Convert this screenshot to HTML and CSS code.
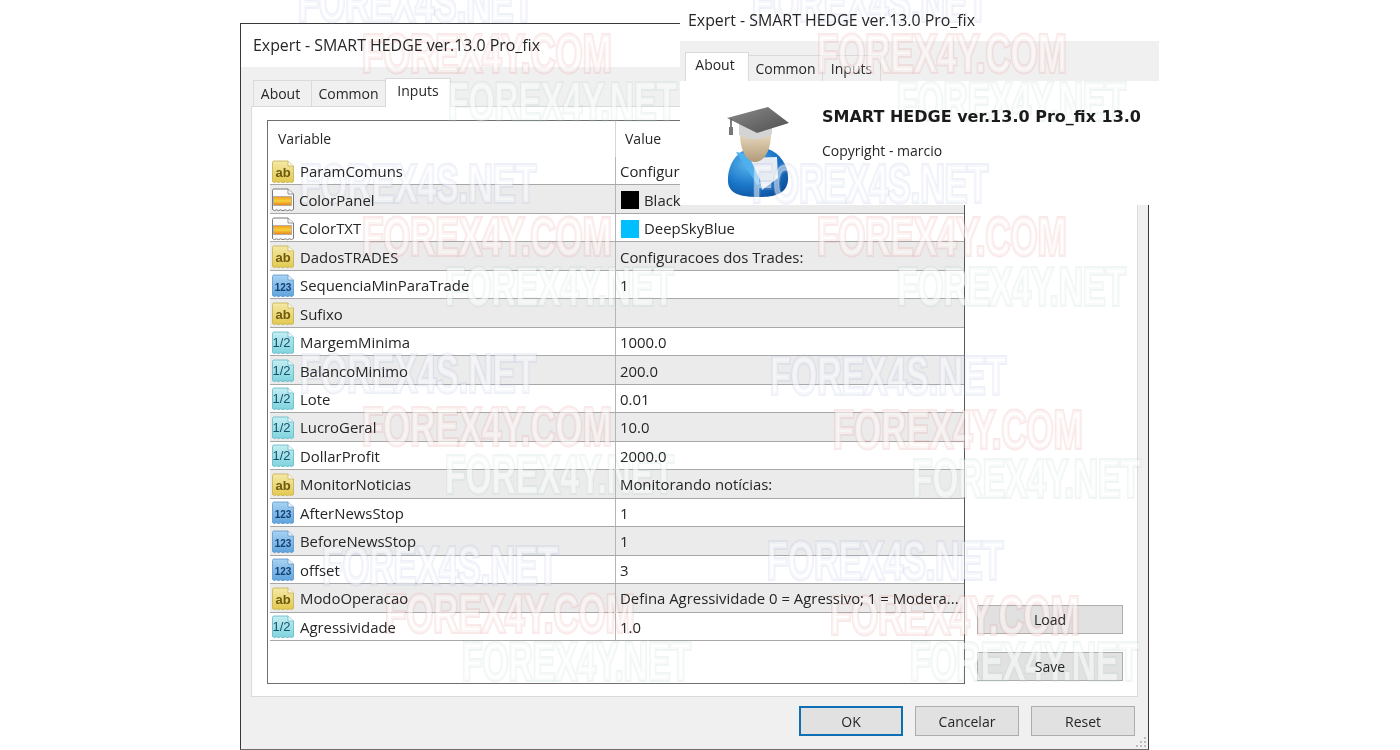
FILE: index.html
```html
<!DOCTYPE html>
<html lang="en">
<head>
    <meta charset="UTF-8">
    <title>Expert - SMART HEDGE ver.13.0 Pro_fix</title>
    <link rel="stylesheet" href="styles.css">
</head>
<body>
    <svg class="defs" width="0" height="0">
        <defs>
            <linearGradient id="gradAb" x1="0" y1="0" x2="0" y2="1">
                <stop offset="0" stop-color="#f4e9a8"/>
                <stop offset="1" stop-color="#e3c94e"/>
            </linearGradient>
            <linearGradient id="gradInt" x1="0" y1="0" x2="0" y2="1">
                <stop offset="0" stop-color="#a9d3f2"/>
                <stop offset="1" stop-color="#5ea3dd"/>
            </linearGradient>
            <linearGradient id="gradDbl" x1="0" y1="0" x2="0" y2="1">
                <stop offset="0" stop-color="#c4eef2"/>
                <stop offset="1" stop-color="#7fd3de"/>
            </linearGradient>
            <linearGradient id="gradBar" x1="0" y1="0" x2="0" y2="1">
                <stop offset="0" stop-color="#f39a1a"/>
                <stop offset="0.5" stop-color="#f6d23c"/>
                <stop offset="1" stop-color="#ec7a18"/>
            </linearGradient>
            <linearGradient id="gradCap" x1="0" y1="0" x2="1" y2="1">
                <stop offset="0" stop-color="#8b8b8b"/>
                <stop offset="1" stop-color="#4f4f4f"/>
            </linearGradient>
            <linearGradient id="gradFace" x1="0" y1="0" x2="0" y2="1">
                <stop offset="0" stop-color="#e6d8bd"/>
                <stop offset="1" stop-color="#b39a78"/>
            </linearGradient>
            <radialGradient id="gradSuit" cx="0.35" cy="0.3" r="0.85">
                <stop offset="0" stop-color="#5db8ee"/>
                <stop offset="0.55" stop-color="#1a76c8"/>
                <stop offset="1" stop-color="#0b4a94"/>
            </radialGradient>
            <symbol id="sheet" viewBox="0 0 24 24">
                <path d="M1.5 2.5 Q1.5 1 3 1 H17 L22.5 6 V21.5 Q20.5 23.5 18.5 21.8 Q16.5 23.5 14.5 21.8 Q12 23.5 9.5 21.8 Q7.5 23.5 5.5 21.8 Q3.5 23.5 1.5 21.5 Z"/>
                <path d="M17 1 V6 H22.5" fill="#ffffff" fill-opacity="0.75" stroke-width="0.7"/>
            </symbol>
        </defs>
    </svg>

    <div class="window main-window">
        <div class="title main-title">Expert - SMART HEDGE ver.13.0 Pro_fix</div>
        <div class="main-body">
            <div class="tabs main-tabs">
                <div class="tab tab-about">About</div>
                <div class="tab tab-common">Common</div>
                <div class="tab tab-inputs active">Inputs</div>
            </div>
            <div class="panel">
                <div class="grid-box">
                    <div class="grid-head">
                        <div class="head-name">Variable</div>
                        <div class="head-value">Value</div>
                    </div>

                    <div class="row">
                        <div class="cell-name"><svg class="icon ab"><use href="#sheet"/><text x="12" y="16.5">ab</text></svg>ParamComuns</div>
                        <div class="cell-value">Configuracoes Gerais:</div>
                    </div>
                    <div class="row">
                        <div class="cell-name tight"><svg class="icon col"><use href="#sheet"/><rect x="2.5" y="8.5" width="18" height="9" fill="url(#gradBar)" stroke="#a8a8a8" stroke-width="0.8"/></svg>ColorPanel</div>
                        <div class="cell-value"><span class="swatch black"></span>Black</div>
                    </div>
                    <div class="row">
                        <div class="cell-name tight"><svg class="icon col"><use href="#sheet"/><rect x="2.5" y="8.5" width="18" height="9" fill="url(#gradBar)" stroke="#a8a8a8" stroke-width="0.8"/></svg>ColorTXT</div>
                        <div class="cell-value"><span class="swatch sky"></span>DeepSkyBlue</div>
                    </div>
                    <div class="row">
                        <div class="cell-name"><svg class="icon ab"><use href="#sheet"/><text x="12" y="16.5">ab</text></svg>DadosTRADES</div>
                        <div class="cell-value">Configuracoes dos Trades:</div>
                    </div>
                    <div class="row">
                        <div class="cell-name"><svg class="icon int"><use href="#sheet"/><text x="12" y="17">123</text></svg>SequenciaMinParaTrade</div>
                        <div class="cell-value">1</div>
                    </div>
                    <div class="row">
                        <div class="cell-name"><svg class="icon ab"><use href="#sheet"/><text x="12" y="16.5">ab</text></svg>Sufixo</div>
                        <div class="cell-value"></div>
                    </div>
                    <div class="row">
                        <div class="cell-name"><svg class="icon dbl"><use href="#sheet"/><text x="10.5" y="16">1/2</text></svg>MargemMinima</div>
                        <div class="cell-value">1000.0</div>
                    </div>
                    <div class="row">
                        <div class="cell-name"><svg class="icon dbl"><use href="#sheet"/><text x="10.5" y="16">1/2</text></svg>BalancoMinimo</div>
                        <div class="cell-value">200.0</div>
                    </div>
                    <div class="row">
                        <div class="cell-name"><svg class="icon dbl"><use href="#sheet"/><text x="10.5" y="16">1/2</text></svg>Lote</div>
                        <div class="cell-value">0.01</div>
                    </div>
                    <div class="row">
                        <div class="cell-name"><svg class="icon dbl"><use href="#sheet"/><text x="10.5" y="16">1/2</text></svg>LucroGeral</div>
                        <div class="cell-value">10.0</div>
                    </div>
                    <div class="row">
                        <div class="cell-name"><svg class="icon dbl"><use href="#sheet"/><text x="10.5" y="16">1/2</text></svg>DollarProfit</div>
                        <div class="cell-value">2000.0</div>
                    </div>
                    <div class="row">
                        <div class="cell-name"><svg class="icon ab"><use href="#sheet"/><text x="12" y="16.5">ab</text></svg>MonitorNoticias</div>
                        <div class="cell-value">Monitorando notícias:</div>
                    </div>
                    <div class="row">
                        <div class="cell-name"><svg class="icon int"><use href="#sheet"/><text x="12" y="17">123</text></svg>AfterNewsStop</div>
                        <div class="cell-value">1</div>
                    </div>
                    <div class="row">
                        <div class="cell-name"><svg class="icon int"><use href="#sheet"/><text x="12" y="17">123</text></svg>BeforeNewsStop</div>
                        <div class="cell-value">1</div>
                    </div>
                    <div class="row">
                        <div class="cell-name"><svg class="icon int"><use href="#sheet"/><text x="12" y="17">123</text></svg>offset</div>
                        <div class="cell-value">3</div>
                    </div>
                    <div class="row">
                        <div class="cell-name"><svg class="icon ab"><use href="#sheet"/><text x="12" y="16.5">ab</text></svg>ModoOperacao</div>
                        <div class="cell-value">Defina Agressividade 0 = Agressivo; 1 = Modera...</div>
                    </div>
                    <div class="row">
                        <div class="cell-name"><svg class="icon dbl"><use href="#sheet"/><text x="10.5" y="16">1/2</text></svg>Agressividade</div>
                        <div class="cell-value">1.0</div>
                    </div>
                </div>
                <div class="side-buttons">
                    <button class="btn btn-side"><span>Load</span></button>
                    <button class="btn btn-side"><span>Save</span></button>
                </div>
            </div>
            <div class="footer">
                <button class="btn btn-foot btn-ok"><span>OK</span></button>
                <button class="btn btn-foot"><span>Cancelar</span></button>
                <button class="btn btn-foot"><span>Reset</span></button>
            </div>
            <svg class="grip" viewBox="0 0 12 12"><path d="M9 1h2v2H9zM5 5h2v2H5zM9 5h2v2H9zM1 9h2v2H1zM5 9h2v2H5zM9 9h2v2H9z"/></svg>
        </div>
    </div>

    <div class="window about-window">
        <div class="title about-title">Expert - SMART HEDGE ver.13.0 Pro_fix</div>
        <div class="about-strip">
            <div class="tab about-tab-about active">About</div>
            <div class="tab about-tab-common">Common</div>
            <div class="tab about-tab-inputs">Inputs</div>
        </div>
        <div class="about-body">
            <svg class="grad-icon" viewBox="0 0 70 100">
                <path d="M6 78 C5 62 14 48 26 45 L46 45 C58 49 67 62 66 76 C65 90 52 93 38 93 C24 93 7 92 6 78 Z" fill="url(#gradSuit)"/>
                <path d="M26 54 L55 53 L56 74 L40 86 L38 76 Z" fill="#e6ecf1"/>
                <path d="M14 48 L26 50 L38 76 L36 82 Z" fill="#4fb0ee"/>
                <path d="M18 30 C18 48 26 58 33 58 C41 58 49 48 49 30 Z" fill="url(#gradFace)"/>
                <path d="M17 18 L17 31 Q34 40 50 30 L50 22 L35 29 Z" fill="#d4d4d4"/>
                <path d="M5 14 L46 3 L67 19 L35 29 Z" fill="url(#gradCap)"/>
                <path d="M9 15 L9 24" stroke="#555555" stroke-width="1.5"/>
                <rect x="7" y="23" width="4" height="8" fill="#777777"/>
            </svg>
            <div class="about-text">
                <div class="about-name">SMART HEDGE ver.13.0 Pro_fix 13.0</div>
                <div class="about-copy">Copyright - marcio</div>
            </div>
        </div>
        <div class="mark net-s m2">FOREX4S.NET</div>
        <div class="mark com m4">FOREX4Y.COM</div>
        <div class="mark net m6">FOREX4Y.NET</div>
        <div class="mark net-s m8">FOREX4S.NET</div>
    </div>

    <div class="mark net-s m1">FOREX4S.NET</div>
    <div class="mark com m3">FOREX4Y.COM</div>
    <div class="mark net m5">FOREX4Y.NET</div>
    <div class="mark net-s m7">FOREX4S.NET</div>
    <div class="mark com m9">FOREX4Y.COM</div>
    <div class="mark com m10">FOREX4Y.COM</div>
    <div class="mark net m11">FOREX4Y.NET</div>
    <div class="mark net m12">FOREX4Y.NET</div>
    <div class="mark net-s m13">FOREX4S.NET</div>
    <div class="mark net-s m14">FOREX4S.NET</div>
    <div class="mark com m15">FOREX4Y.COM</div>
    <div class="mark com m16">FOREX4Y.COM</div>
    <div class="mark net m17">FOREX4Y.NET</div>
    <div class="mark net m18">FOREX4Y.NET</div>
    <div class="mark net-s m19">FOREX4S.NET</div>
    <div class="mark net-s m20">FOREX4S.NET</div>
    <div class="mark com m21">FOREX4Y.COM</div>
    <div class="mark com m22">FOREX4Y.COM</div>
    <div class="mark net m23">FOREX4Y.NET</div>
    <div class="mark net m24">FOREX4Y.NET</div>
</body>
</html>
```

FILE: styles.css
```css
html, body {
    margin: 0;
    padding: 0;
    width: 1400px;
    height: 750px;
    overflow: hidden;
    background-color: #fff;
}

body {
    position: relative;
    font-family: "Open Sans", "Noto Sans", sans-serif;
    font-size: 14px;
    color: #262626;
    filter: blur(0.35px);
}

.defs {
    position: absolute;
}

.window {
    position: absolute;
    box-sizing: border-box;
    background-color: #fff;
}

.main-window {
    left: 240px;
    top: 23px;
    width: 909px;
    height: 727px;
    display: flex;
    flex-direction: column;
    border: 1px solid #3a3a3a;
    border-bottom-color: #6e6e6e;
}

/* text sits over the watermark, backgrounds stay under it */
.title,
.head-name,
.head-value,
.cell-name,
.cell-value,
.btn span,
.about-text {
    position: relative;
    z-index: 1;
}

.title {
    font-size: 15.9px;
    white-space: nowrap;
}

.main-title {
    height: 43px;
    line-height: 43px;
    padding-left: 12px;
}

.main-body {
    position: relative;
    flex: 1;
    padding: 10px 10px 0 10px;
    background-color: #f0f0f0;
}

.tabs {
    display: flex;
    height: 29px;
    padding-left: 2px;
    align-items: flex-end;
}

.tab {
    box-sizing: border-box;
    height: 26px;
    line-height: 26px;
    text-align: center;
    background-color: #f0f0f0;
    border: 1px solid #dadada;
    border-bottom: none;
    margin-left: -1px;
}

.tab.active {
    height: 29px;
    line-height: 24px;
    background-color: #fff;
    position: relative;
    top: 1px;
}

.tab-about { width: 59px; margin-left: 0; padding-right: 4px; }
.tab-common { width: 75px; }
.tab-inputs { width: 66px; }

.panel {
    box-sizing: border-box;
    height: 591px;
    width: 887px;
    display: flex;
    padding: 13px 0 14px 15px;
    background-color: #fff;
    border: 1px solid #dadada;
}

.grid-box {
    box-sizing: border-box;
    width: 698px;
    height: 564px;
    border: 1px solid #6f6f6f;
    border-right-color: #555;
    padding-left: 2px;
    background-color: #fff;
}

.grid-head {
    display: flex;
    height: 36px;
    line-height: 36px;
}

.head-name {
    width: 346px;
    padding-left: 8px;
    box-sizing: border-box;
    border-right: 1px solid #d8d8d8;
}

.head-value {
    padding-left: 9px;
}

.row {
    display: flex;
    box-sizing: border-box;
    height: 28.47px;
    line-height: 27px;
    font-size: 14.9px;
    border-bottom: 1px solid #a8a8a8;
    white-space: nowrap;
}

.row:nth-of-type(odd) {
    background-color: #ebebeb;
}

.cell-name {
    width: 346px;
    box-sizing: border-box;
    display: flex;
    align-items: center;
    padding-top: 2px;
    border-right: 1px solid #b5b5b5;
}

.cell-value {
    display: flex;
    align-items: center;
    padding-top: 2px;
    padding-left: 4px;
    overflow: hidden;
}

.icon {
    width: 24px;
    height: 24px;
    margin: 0 5px 0 1px;
    flex: none;
}

.tight .icon {
    margin-right: 4px;
}

.icon text {
    font-family: "Liberation Sans", sans-serif;
    font-weight: bold;
    font-size: 12px;
    text-anchor: middle;
    stroke: none;
}

.ab {
    fill: url(#gradAb);
    stroke: #c4ae50;
    stroke-width: 0.8;
}

.ab text {
    fill: #6e5a10;
    font-size: 13px;
}

.int {
    fill: url(#gradInt);
    stroke: #5c94c6;
    stroke-width: 0.8;
}

.int text {
    fill: #123f74;
    font-size: 10px;
}

.dbl {
    fill: url(#gradDbl);
    stroke: #62b6c4;
    stroke-width: 0.8;
}

.dbl text {
    fill: #17516a;
    font-size: 13px;
    font-weight: normal;
}

.col {
    fill: #fbfbfb;
    stroke: #6b6b6b;
    stroke-width: 0.9;
}

.swatch {
    width: 18px;
    height: 18px;
    margin: 0 5px 0 1px;
    flex: none;
}

.black { background-color: #000; }
.sky { background-color: #00bfff; }

.side-buttons {
    display: flex;
    flex-direction: column;
    justify-content: flex-end;
    gap: 18px;
    margin-left: 12px;
    padding-bottom: 1px;
}

.btn {
    box-sizing: border-box;
    padding: 0;
    font-family: inherit;
    font-size: 14px;
    color: #262626;
    background-color: #e1e1e1;
    border: 1px solid #adadad;
}

.btn-side {
    width: 146px;
    height: 29px;
}

.footer {
    display: flex;
    justify-content: flex-end;
    gap: 12px;
    padding: 9px 3px 0 0;
}

.btn-foot {
    width: 104px;
    height: 30px;
}

.btn-ok {
    border: 2px solid #0f6fb5;
}

.grip {
    position: absolute;
    right: 1px;
    bottom: 1px;
    width: 12px;
    height: 12px;
    fill: #bdbdbd;
}

.about-window {
    left: 680px;
    top: 0;
    width: 479px;
    height: 205px;
    z-index: 2;
    display: flex;
    flex-direction: column;
}

.about-title {
    height: 41px;
    line-height: 40px;
    padding-left: 8px;
}

.about-strip {
    display: flex;
    align-items: flex-end;
    height: 40px;
    padding-left: 5px;
    background-color: #f0f0f0;
}

.about-strip .tab {
    line-height: 25px;
}

.about-strip .tab.active {
    top: 0;
    line-height: 24px;
    width: 64px;
    margin-left: 0;
    padding-right: 4px;
}

.about-tab-common { width: 75px; }
.about-tab-inputs { width: 59px; }

.about-body {
    flex: 1;
    display: flex;
    margin-left: 5px;
    padding: 23px 0 0 37px;
    background-color: #fff;
}

.grad-icon {
    width: 70px;
    height: 100px;
    flex: none;
}

.about-text {
    margin-left: 30px;
    padding-top: 1px;
}

.about-name {
    font-family: "DejaVu Sans", sans-serif;
    font-weight: bold;
    font-size: 16px;
    line-height: 24px;
    color: #1a1a1a;
}

.about-copy {
    margin-top: 11px;
    line-height: 22px;
}

.mark {
    position: absolute;
    font-family: "Liberation Sans", sans-serif;
    font-weight: bold;
    font-size: 54px;
    line-height: 54px;
    white-space: nowrap;
    pointer-events: none;
    transform-origin: left top;
    paint-order: stroke fill;
}

.net-s {
    color: rgba(255, 255, 255, 0.5);
    -webkit-text-stroke: 4px rgba(175, 185, 225, 0.2);
    transform: scaleX(0.63);
}

.com {
    color: rgba(255, 255, 255, 0.5);
    -webkit-text-stroke: 4px rgba(235, 165, 165, 0.24);
    transform: scaleX(0.645);
}

.net {
    color: rgba(255, 255, 255, 0.55);
    -webkit-text-stroke: 4px rgba(185, 215, 205, 0.22);
    transform: scaleX(0.62);
}

.m1 { left: 298px; top: -25px; }
.m2 { left: 72px; top: -25px; }
.m3 { left: 362px; top: 26px; }
.m4 { left: 137px; top: 26px; }
.m5 { left: 448px; top: 74px; }
.m6 { left: 217px; top: 74px; }
.m7 { left: 300px; top: 156px; }
.m8 { left: 72px; top: 156px; }
.m9 { left: 362px; top: 209px; }
.m10 { left: 817px; top: 209px; }
.m11 { left: 445px; top: 259px; }
.m12 { left: 897px; top: 259px; }
.m13 { left: 300px; top: 346px; }
.m14 { left: 770px; top: 348px; }
.m15 { left: 362px; top: 399px; }
.m16 { left: 833px; top: 402px; }
.m17 { left: 445px; top: 447px; }
.m18 { left: 912px; top: 451px; }
.m19 { left: 322px; top: 538px; }
.m20 { left: 767px; top: 533px; }
.m21 { left: 385px; top: 586px; }
.m22 { left: 830px; top: 588px; }
.m23 { left: 462px; top: 634px; }
.m24 { left: 910px; top: 634px; }
```
